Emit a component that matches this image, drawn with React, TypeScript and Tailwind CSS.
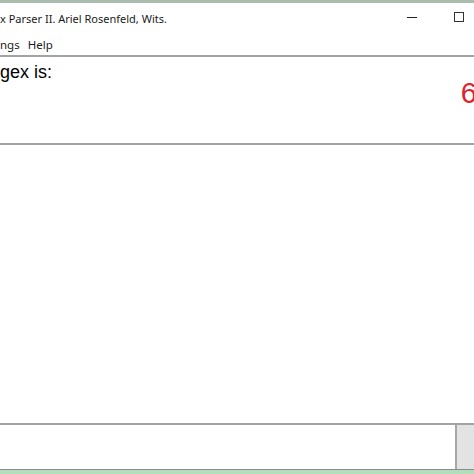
export default function App() {
  return (
    <div className="w-[474px] h-[474px] overflow-hidden bg-white flex flex-col">
      {/* window frame top */}
      <div className="h-[3px] bg-[#a9bcad]" />

      {/* title bar */}
      <div className="h-[30px] flex items-start relative">
        <span className="mt-[9px] text-[11px] leading-[14px] text-[#1a1a1a] font-['Noto_Sans',sans-serif] whitespace-nowrap">
          x Parser II. Ariel Rosenfeld, Wits.
        </span>
        <div className="ml-auto flex items-start">
          <div className="w-[10px] h-[1px] bg-[#222] mt-[14px] mr-[37px]" />
          <div className="w-[10px] h-[10px] border border-[#333] mt-[9px] mr-[10px]" />
        </div>
      </div>

      {/* menu */}
      <div className="h-[22px] flex items-start gap-[8px] text-[11.5px] leading-[14px] text-[#1a1a1a] font-['Noto_Sans',sans-serif]">
        <span className="mt-[5px]">ngs</span>
        <span className="mt-[5px]">Help</span>
      </div>

      {/* result panel */}
      <div className="h-[90px] border-t-2 border-b-2 border-[#a3a3a3] flex items-start justify-between overflow-hidden">
        <span className="mt-[6px] text-[18px] leading-none text-black font-['Liberation_Sans',Arial,sans-serif]">
          gex is:
        </span>
        <span className="mt-[22px] mr-[-3px] text-[29px] leading-none text-[#e2202c] font-['Liberation_Sans',Arial,sans-serif]">
          6
        </span>
      </div>

      {/* empty body */}
      <div className="flex-1" />

      {/* input row */}
      <div className="h-[46px] border-t-2 border-[#a3a3a3] flex">
        <input className="flex-1 bg-white outline-none px-1 text-[12px]" />
        <div className="w-[19px] border-l-2 border-[#a8a8a8] bg-[#e3e3e3]" />
      </div>

      {/* window frame bottom */}
      <div className="h-[1px] bg-[#8a8a8a]" />
      <div className="h-[4px] bg-[#b2dcbc]" />
    </div>
  );
}
